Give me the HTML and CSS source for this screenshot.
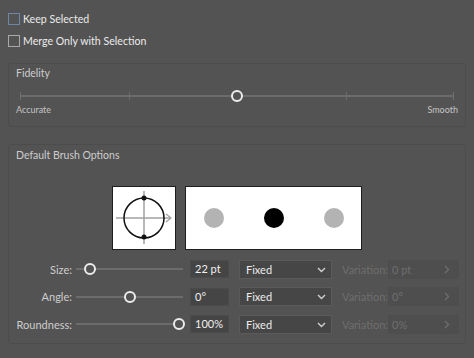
FILE: index.html
```html
<!DOCTYPE html>
<html>
<head>
  <meta charset="UTF-8">
  <title>Blob Brush Options</title>
  <link rel="stylesheet" href="styles.css">
</head>
<body>
  <div class="dialog">
    <!-- Checkboxes -->
    <label class="check focused"><span class="box"></span>Keep Selected</label>
    <label class="check"><span class="box"></span>Merge Only with Selection</label>

    <!-- Fidelity -->
    <div class="group fidelity">
      <div class="group-title">Fidelity</div>
      <div class="fid-slider">
        <div class="track"></div>
        <span class="tick t0"></span>
        <span class="tick t1"></span>
        <span class="tick t3"></span>
        <span class="tick t4"></span>
        <span class="knob" style="left: 50%"></span>
      </div>
      <div class="fid-labels">
        <span>Accurate</span>
        <span>Smooth</span>
      </div>
    </div>

    <!-- Default Brush Options -->
    <div class="group brush">
      <div class="group-title">Default Brush Options</div>

      <div class="preview">
        <div class="tip-box">
          <svg width="62" height="62" viewBox="0 0 62 62">
            <line x1="3" y1="31" x2="58" y2="31" stroke="#a0a0a0" stroke-width="1.5"/>
            <polyline points="53,27 58,31 53,35" fill="none" stroke="#a0a0a0" stroke-width="1.2"/>
            <line x1="31" y1="4" x2="31" y2="57" stroke="#a0a0a0" stroke-width="1.5"/>
            <circle cx="31" cy="31" r="20" fill="none" stroke="#111" stroke-width="1.5"/>
            <circle cx="31" cy="11" r="2.5" fill="#111"/>
            <circle cx="31" cy="50" r="2.5" fill="#111"/>
          </svg>
        </div>
        <div class="dots-box">
          <span class="dot grey"></span>
          <span class="dot black"></span>
          <span class="dot grey"></span>
        </div>
      </div>

      <div class="row">
        <span class="row-label">Size:</span>
        <div class="mini-slider"><span class="knob" style="left: 13%"></span></div>
        <div class="field">22 pt</div>
        <div class="select">Fixed<svg class="chev" width="9" height="6" viewBox="0 0 9 6"><polyline points="1,1 4.5,4.5 8,1" fill="none" stroke="#d0d0d0" stroke-width="1.4"/></svg></div>
        <span class="var-label">Variation:</span>
        <div class="var-field">0 pt<svg class="arrow" width="6" height="9" viewBox="0 0 6 9"><polyline points="1,1 4.5,4.5 1,8" fill="none" stroke="#6e6e6e" stroke-width="1.3"/></svg></div>
      </div>

      <div class="row">
        <span class="row-label">Angle:</span>
        <div class="mini-slider"><span class="knob" style="left: 50%"></span></div>
        <div class="field">0°</div>
        <div class="select">Fixed<svg class="chev" width="9" height="6" viewBox="0 0 9 6"><polyline points="1,1 4.5,4.5 8,1" fill="none" stroke="#d0d0d0" stroke-width="1.4"/></svg></div>
        <span class="var-label">Variation:</span>
        <div class="var-field">0°<svg class="arrow" width="6" height="9" viewBox="0 0 6 9"><polyline points="1,1 4.5,4.5 1,8" fill="none" stroke="#6e6e6e" stroke-width="1.3"/></svg></div>
      </div>

      <div class="row">
        <span class="row-label">Roundness:</span>
        <div class="mini-slider"><span class="knob" style="left: 96%"></span></div>
        <div class="field">100%</div>
        <div class="select">Fixed<svg class="chev" width="9" height="6" viewBox="0 0 9 6"><polyline points="1,1 4.5,4.5 8,1" fill="none" stroke="#d0d0d0" stroke-width="1.4"/></svg></div>
        <span class="var-label">Variation:</span>
        <div class="var-field">0%<svg class="arrow" width="6" height="9" viewBox="0 0 6 9"><polyline points="1,1 4.5,4.5 1,8" fill="none" stroke="#6e6e6e" stroke-width="1.3"/></svg></div>
      </div>
    </div>
  </div>
</body>
</html>
```

FILE: styles.css
```css
/* Base */
* {
  box-sizing: border-box;
}

body {
  margin: 0;
  background-color: #535353;
  font-family: Lato, "Noto Sans", sans-serif;
  color: #e4e4e4;
}

.dialog {
  width: 474px;
  height: 358px;
  padding: 11px 8px 0 8px;
}

/* Checkboxes */
.check {
  display: flex;
  align-items: center;
  height: 16px;
  margin-bottom: 6px;
  font-size: 10.6px;
  color: #ececec;
}

.check .box {
  width: 12px;
  height: 12px;
  border: 1px solid #a8a8a8;
  margin-right: 3px;
}

.check.focused .box {
  border-color: #7186a6;
}

/* Groups */
.group {
  border: 1px solid #4c4c4c;
  border-radius: 3px;
  padding: 2px 7px 0 7px;
}

.group-title {
  font-size: 10.5px;
  line-height: 14px;
  color: #cdcdcd;
}

.fidelity {
  margin-top: 14px;
  height: 64px;
}

.fid-slider {
  position: relative;
  height: 12px;
  margin: 10px 4px 0 4px;
}

.track {
  position: absolute;
  left: 0;
  right: 0;
  top: 5px;
  height: 2px;
  background: #6c6c6c;
}

.tick {
  position: absolute;
  top: 2px;
  width: 1px;
  height: 8px;
  background: #6c6c6c;
}

.tick.t0 { left: 0; }
.tick.t1 { left: 25%; }
.tick.t3 { left: 75%; }
.tick.t4 { right: 0; }

.knob {
  position: absolute;
  top: 50%;
  width: 12px;
  height: 12px;
  margin: -6px 0 0 -6px;
  border: 2px solid #ececec;
  border-radius: 50%;
  background: #535353;
}

.fid-labels {
  display: flex;
  justify-content: space-between;
  margin-top: 2px;
  font-size: 9px;
  color: #c4c4c4;
}

.brush {
  margin-top: 17px;
  height: 200px;
  padding-top: 3px;
}

/* Preview boxes */
.preview {
  display: flex;
  justify-content: center;
  gap: 9px;
  margin-top: 24px;
}

.tip-box,
.dots-box {
  height: 64px;
  background: #fff;
  border: 1px solid #1e1e1e;
}

.tip-box {
  width: 64px;
}

.tip-box svg {
  display: block;
}

.dots-box {
  width: 177px;
  display: flex;
  align-items: center;
  justify-content: center;
  gap: 40px;
}

.dot {
  width: 20px;
  height: 20px;
  border-radius: 50%;
}

.dot.grey {
  background: #b3b3b3;
}

.dot.black {
  background: #000;
}

/* Option rows */
.row {
  display: flex;
  align-items: center;
  height: 20px;
  margin-top: 7.5px;
  font-size: 11px;
}

.row > * {
  flex-shrink: 0;
}

.preview + .row {
  margin-top: 9px;
}

.row-label {
  width: 56px;
  text-align: right;
  color: #cdcdcd;
}

.mini-slider {
  position: relative;
  width: 107px;
  height: 2px;
  margin: 0 7px 0 4px;
  background: #6c6c6c;
}

.field {
  width: 39px;
  height: 18px;
  line-height: 16px;
  padding-left: 4px;
  background: #454545;
  border: 1px solid #4b4b4b;
  color: #f0f0f0;
}

.select {
  position: relative;
  width: 93px;
  height: 19px;
  line-height: 17px;
  margin-left: 10px;
  padding-left: 6px;
  background: #464646;
  border: 1px solid #5a5a5a;
  color: #ececec;
}

.select .chev {
  position: absolute;
  right: 5px;
  top: 6px;
}

.var-label {
  width: 46px;
  margin-left: 10px;
  color: #6e6e6e;
}

.var-field {
  position: relative;
  width: 71px;
  height: 19px;
  line-height: 19px;
  padding-left: 4px;
  background: #4e4e4e;
  color: #6e6e6e;
}

.var-field .arrow {
  position: absolute;
  right: 9px;
  top: 5px;
}
```
